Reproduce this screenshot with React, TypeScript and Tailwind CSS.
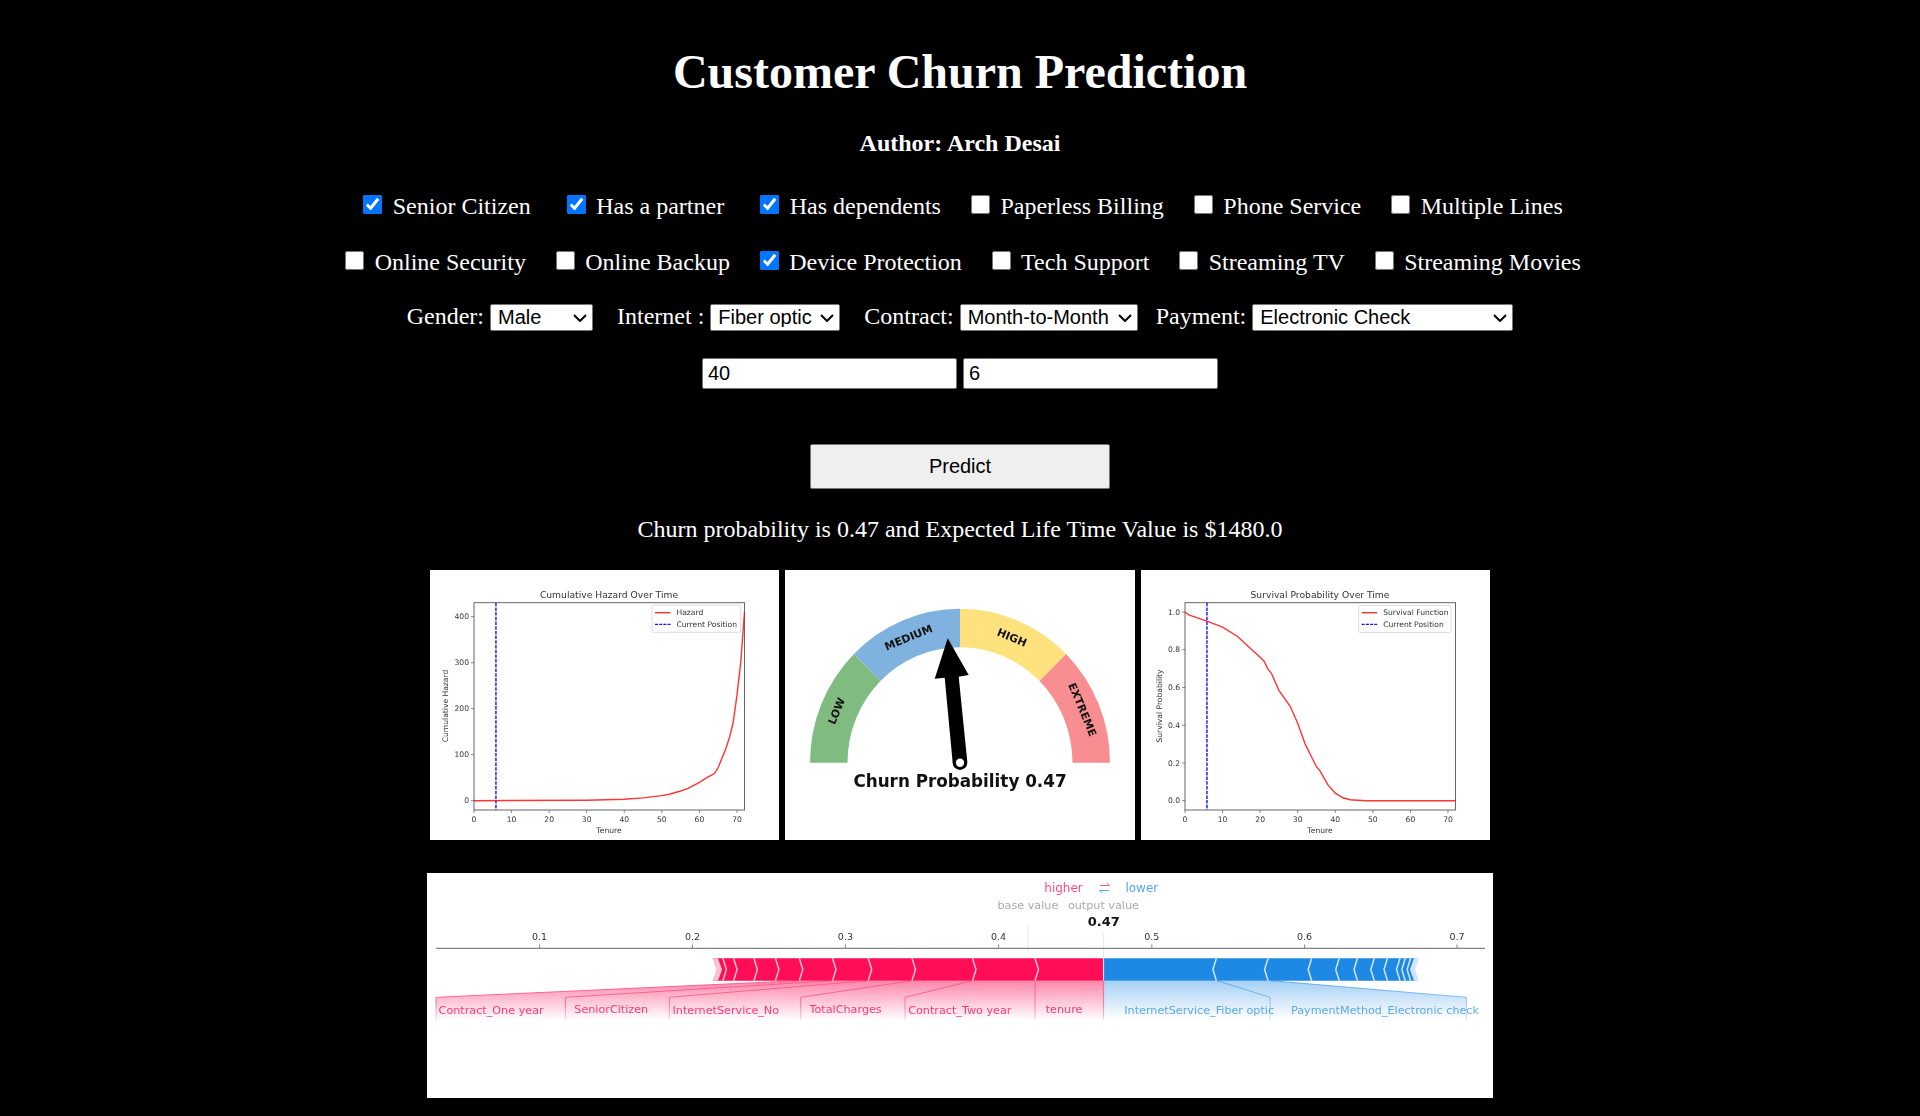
import React from "react";

const serif = { fontFamily: '"Liberation Serif", serif' };

function Check({ label, checked, cls = "" }: { label: string; checked?: boolean; cls?: string }) {
  return (
    <label className={"flex items-center gap-[10.5px] " + cls}>
      <input type="checkbox" defaultChecked={checked} className="w-[19px] h-[19px] m-0 -mt-[3px]" />
      <span>{label}</span>
    </label>
  );
}

function Sel({ value, cls }: { value: string; cls: string }) {
  return (
    <div className={"relative h-[27px] ml-[6px] " + cls}>
      <select
        defaultValue={value}
        className="block w-full h-full appearance-none bg-white text-black border border-[#767676] rounded-[2px] pl-[7px] pb-[2px] text-[20px] leading-none font-['Liberation_Sans',sans-serif]"
      >
        <option>{value}</option>
      </select>
      <svg viewBox="0 0 14 8" width="14" height="8" className="absolute right-[6px] top-[10px] pointer-events-none">
        <polyline points="1,1 7,7 13,1" fill="none" stroke="#000" strokeWidth="2" />
      </svg>
    </div>
  );
}

const dv = "DejaVu Sans, sans-serif";

function LineChart({
  title, ylabel, ticks, pts, y0, k, legend, lx, lw, ly, lh, ylx,
}: {
  title: string; ylabel: string; ticks: [number, string][]; pts: [number, number][];
  y0: number; k: number; legend: string; lx: number; lw: number; ly: number; lh: number; ylx: number;
}) {
  const X = (t: number) => 44 + 3.757 * t;
  const Y = (v: number) => y0 - k * v;
  const d = pts.map((p) => `${X(p[0]).toFixed(1)},${Y(p[1]).toFixed(1)}`).join(" ");
  return (
    <svg viewBox="0 0 349 270" width="349" height="270" className="block blur-[0.5px]" fontFamily={dv}>
      <text x="179" y="27.5" fontSize="9.2" fill="#333" textAnchor="middle">{title}</text>
      <rect x="44" y="32.7" width="270.5" height="207.3" fill="none" stroke="#555" strokeWidth="0.9" />
      {[0, 10, 20, 30, 40, 50, 60, 70].map((t) => (
        <g key={t}>
          <line x1={X(t)} x2={X(t)} y1="240" y2="243" stroke="#555" strokeWidth="0.7" />
          <text x={X(t)} y="252" fontSize="7.6" fill="#333" textAnchor="middle">{t}</text>
        </g>
      ))}
      {ticks.map(([v, s]) => (
        <g key={s}>
          <line x1="41" x2="44" y1={Y(v)} y2={Y(v)} stroke="#555" strokeWidth="0.7" />
          <text x="39" y={Y(v) + 2.7} fontSize="7.6" fill="#333" textAnchor="end">{s}</text>
        </g>
      ))}
      <text x="179" y="263" fontSize="7.6" fill="#333" textAnchor="middle">Tenure</text>
      <text transform={`translate(${ylx} 136) rotate(-90)`} fontSize="7.6" fill="#333" textAnchor="middle">{ylabel}</text>
      <line x1={X(6) - 0.6} x2={X(6) - 0.6} y1="32.7" y2="240" stroke="#1010ff" strokeWidth="1.4" strokeDasharray="3.5 1.2" />
      <polyline points={d} fill="none" stroke="#ff1010" strokeOpacity="0.85" strokeWidth="1.4" />
      <rect x={lx} y={ly} width={lw} height={lh} rx="1.5" fill="#fff" stroke="#cfcfcf" strokeWidth="0.7" />
      <line x1={lx + 3} x2={lx + 18.5} y1="42.7" y2="42.7" stroke="#ff2020" strokeWidth="1.3" />
      <line x1={lx + 3} x2={lx + 18.5} y1="54.3" y2="54.3" stroke="#1010ff" strokeWidth="1.2" strokeDasharray="3 1.2" />
      <text x={lx + 24.5} y="45.4" fontSize="7.6" fill="#333">{legend}</text>
      <text x={lx + 24.5} y="57" fontSize="7.6" fill="#333">Current Position</text>
    </svg>
  );
}

function wedge(a0: number, a1: number, ro: number, ri: number, cx: number, cy: number) {
  const sy = 1.026;
  const p = (r: number, a: number) => {
    const t = (a * Math.PI) / 180;
    return `${(cx + r * Math.cos(t)).toFixed(2)} ${(cy - r * sy * Math.sin(t)).toFixed(2)}`;
  };
  return `M${p(ro, a0)} A${ro} ${ro * sy} 0 0 1 ${p(ro, a1)} L${p(ri, a1)} A${ri} ${ri * sy} 0 0 0 ${p(ri, a0)} Z`;
}

function Gauge() {
  const cx = 175, cy = 192.7;
  return (
    <svg viewBox="0 0 350 270" width="350" height="270" className="block blur-[0.35px]" fontFamily={dv}>
      <path d={wedge(180, 135, 150, 112.5, cx, cy)} fill="#80bc80" />
      <path d={wedge(135, 90, 150, 112.5, cx, cy)} fill="#7fb2de" />
      <path d={wedge(90, 45, 150, 112.5, cx, cy)} fill="#ffe17d" />
      <path d={wedge(45, 0, 150, 112.5, cx, cy)} fill="#f88e92" />
      {[["LOW", 55, 142.5, -67.5], ["MEDIUM", 125, 71, -22.5], ["HIGH", 225.5, 71, 22.5], ["EXTREME", 294, 141, 67.5]].map(
        ([s, x, y, r]) => (
          <text key={s as string} transform={`translate(${x} ${y}) rotate(${r})`} fontSize="10.8" fontWeight="bold" textAnchor="middle" fill="#111">
            {s}
          </text>
        )
      )}
      <polygon points="162.7,68.3 149.7,108.7 159.7,107.7 167.7,193 182.3,191.7 173.7,106.7 183.7,105" fill="#000" />
      <circle cx={cx} cy={cy} r="7.3" fill="#000" />
      <circle cx={cx} cy={cy} r="4.2" fill="#fff" />
      <text x={cx} y="216.8" fontSize="16.8" fontWeight="bold" textAnchor="middle" fill="#111">Churn Probability 0.47</text>
    </svg>
  );
}

function Force() {
  const T = 85.3, B = 107.7, M = 96.5;
  const reds = [295.9, 306.6, 326.9, 348.4, 372.3, 405.5, 441.2, 485, 545.5, 608];
  const blues = [785.9, 837.6, 881.2, 908.7, 927, 943.8, 957, 969.5, 974.8, 980.1, 985.8];
  const axis: [number, string][] = [[112.6, "0.1"], [265.5, "0.2"], [418.4, "0.3"], [571.6, "0.4"], [724.8, "0.5"], [877.6, "0.6"], [1030, "0.7"]];
  const pinkLines: [number, number][] = [[372.3, 9], [405.5, 138.4], [441.2, 242.3], [485, 373.7], [545.5, 478], [608, 608], [676.6, 676.6]];
  const pinkLabels: [string, number, number][] = [
    ["Contract_One year", 11.6, 141], ["SeniorCitizen", 147.3, 140.3], ["InternetService_No", 245.5, 141],
    ["TotalCharges", 382.6, 140.3], ["Contract_Two year", 481.2, 141], ["tenure", 618.7, 140.3],
  ];
  return (
    <svg viewBox="0 0 1066 225" width="1066" height="225" className="block blur-[0.4px]" fontFamily={dv}>
      <defs>
        <linearGradient id="pg" gradientUnits="userSpaceOnUse" x1="0" y1="107.7" x2="0" y2="147">
          <stop offset="0" stopColor="#ff0d57" stopOpacity="0.5" />
          <stop offset="1" stopColor="#ff0d57" stopOpacity="0" />
        </linearGradient>
        <linearGradient id="pl" gradientUnits="userSpaceOnUse" x1="0" y1="107.7" x2="0" y2="147">
          <stop offset="0" stopColor="#ff5c8d" stopOpacity="1" />
          <stop offset="0.55" stopColor="#ff5c8d" stopOpacity="0.85" />
          <stop offset="1" stopColor="#ff5c8d" stopOpacity="0.25" />
        </linearGradient>
        <linearGradient id="bg" gradientUnits="userSpaceOnUse" x1="0" y1="107.7" x2="0" y2="147">
          <stop offset="0" stopColor="#1e88e5" stopOpacity="0.4" />
          <stop offset="1" stopColor="#1e88e5" stopOpacity="0" />
        </linearGradient>
        <linearGradient id="bl" gradientUnits="userSpaceOnUse" x1="0" y1="107.7" x2="0" y2="147">
          <stop offset="0" stopColor="#5aa9ee" stopOpacity="1" />
          <stop offset="1" stopColor="#5aa9ee" stopOpacity="0.3" />
        </linearGradient>
      </defs>

      <text x="617.3" y="19" fontSize="12" fill="#ff0d57" fillOpacity="0.75">higher</text>
      <text x="698.4" y="19" fontSize="12" fill="#1e88e5" fillOpacity="0.75">lower</text>
      <path d="M673 12.5h9.5l-2.5-2.2" fill="none" stroke="#ff5c8d" strokeWidth="1" />
      <path d="M682 17.5h-9.5l2.5 2.2" fill="none" stroke="#5aa9ee" strokeWidth="1" />
      <text x="570.5" y="36" fontSize="11.2" fill="#aaa">base value</text>
      <text x="640.9" y="36" fontSize="11.2" fill="#aaa">output value</text>
      <text x="676.8" y="52.8" fontSize="13" fontWeight="bold" fill="#111" textAnchor="middle">0.47</text>
      <line x1="601" x2="601" y1="52" y2="80" stroke="#e4e4e4" strokeWidth="0.9" />
      <line x1="676.6" x2="676.6" y1="60" y2="85" stroke="#e4e4e4" strokeWidth="0.9" />

      <line x1="9" x2="1058" y1="75.3" y2="75.3" stroke="#555" strokeWidth="0.9" />
      {axis.map(([x, s]) => (
        <g key={s}>
          <line x1={x} x2={x} y1="71.5" y2="75" stroke="#555" strokeWidth="0.7" />
          <text x={x} y="67.3" fontSize="9.5" fill="#333" textAnchor="middle">{s}</text>
        </g>
      ))}

      <polygon points={`372.3,${B} 676.6,${B} 676.6,147 9,147 9,124.3`} fill="url(#pg)" />
      <polygon points={`676.6,${B} 843.7,${B} 1039.4,124.3 1039.4,147 676.6,147`} fill="url(#bg)" />
      {pinkLines.map(([a, b]) => (
        <polyline key={b} points={`${a},${B} ${b},124.3 ${b},147`} fill="none" stroke="url(#pl)" strokeWidth="1" />
      ))}
      <polyline points={`790,${B} 843,124.3 843,147`} fill="none" stroke="url(#bl)" strokeWidth="1" />
      <polyline points={`843.7,${B} 1039.4,124.3 1039.4,147`} fill="none" stroke="url(#bl)" strokeWidth="1" />

      <polygon points={`286,${T} 676.6,${T} 676.6,${B} 286,${B} 290,${M}`} fill="#ff0d57" />
      <polygon points={`286,${T} 291,${T} 295,${M} 291,${B} 286,${B} 290,${M}`} fill="#ffc3d5" />
      <polygon points={`676.6,${T} 989,${T} 985,${M} 989,${B} 676.6,${B}`} fill="#1e88e5" />
      <polygon points={`987,${T} 992,${T} 988,${M} 992,${B} 987,${B} 983,${M}`} fill="#d1e6fa" />
      {reds.map((x) => (
        <polyline key={x} points={`${x},${T} ${x + 3.5},${M} ${x},${B}`} fill="none" stroke="#ffc3d5" strokeWidth="1.5" />
      ))}
      {blues.map((x) => (
        <polyline key={x} points={`${x + 3.5},${T} ${x},${M} ${x + 3.5},${B}`} fill="none" stroke="#d1e6fa" strokeWidth="1.5" />
      ))}
      <line x1="676.6" x2="676.6" y1={T} y2={B} stroke="#fff" strokeWidth="0.8" />

      {pinkLabels.map(([s, x, y]) => (
        <text key={s} x={x} y={y} fontSize="11.2" fill="#ff0d57" fillOpacity="0.8">{s}</text>
      ))}
      <text x="697.3" y="141" fontSize="11.2" fill="#1e88e5" fillOpacity="0.7">InternetService_Fiber optic</text>
      <text x="864" y="141" fontSize="11.2" fill="#1e88e5" fillOpacity="0.7">PaymentMethod_Electronic check</text>
    </svg>
  );
}

export default function App() {
  const inputCls = "w-[255px] h-[31px] bg-white text-black border border-[#767676] rounded-[2px] px-[5px] text-[20px] font-['Liberation_Sans',sans-serif]";
  return (
    <div className="min-h-screen bg-black text-white text-center text-[24px] pt-[40px] pb-[18px]" style={serif}>
      <h1 className="text-[48px] font-bold leading-[64px]">Customer Churn Prediction</h1>
      <h3 className="mt-[24px] text-[24px] font-bold leading-[30px]">Author: Arch Desai</h3>

      <div className="mt-[34px] pl-[6px] flex justify-center gap-x-[30px] h-[28px] leading-[28px]">
        <Check label="Senior Citizen" checked />
        <Check label="Has a partner" checked cls="ml-[6px]" />
        <Check label="Has dependents" checked cls="ml-[6px]" />
        <Check label="Paperless Billing" />
        <Check label="Phone Service" />
        <Check label="Multiple Lines" />
      </div>
      <div className="mt-[28px] pl-[6px] flex justify-center gap-x-[29.8px] h-[28px] leading-[28px]">
        <Check label="Online Security" />
        <Check label="Online Backup" />
        <Check label="Device Protection" checked />
        <Check label="Tech Support" />
        <Check label="Streaming TV" />
        <Check label="Streaming Movies" />
      </div>

      <div className="mt-[28px] flex justify-center items-center h-[27px] leading-[27px]">
        <span className="pb-[2px]">Gender:</span>
        <Sel value="Male" cls="w-[103px]" />
        <span className="ml-[24px] pb-[2px]">Internet :</span>
        <Sel value="Fiber optic" cls="w-[130px]" />
        <span className="ml-[24px] pb-[2px]">Contract:</span>
        <Sel value="Month-to-Month" cls="w-[178px]" />
        <span className="ml-[18px] pb-[2px]">Payment:</span>
        <Sel value="Electronic Check" cls="w-[261px]" />
      </div>

      <div className="mt-[27px] flex justify-center gap-x-[6px]">
        <input defaultValue="40" className={inputCls} />
        <input defaultValue="6" className={inputCls} />
      </div>

      <button className="mt-[55px] block mx-auto w-[300px] h-[45px] pb-[2px] bg-[#efefef] text-black border border-[#767676] rounded-[2px] text-[20px] font-['Liberation_Sans',sans-serif]">
        Predict
      </button>

      <p className="mt-[25px] leading-[30px]">Churn probability is 0.47 and Expected Life Time Value is $1480.0</p>

      <div className="mt-[26px] flex justify-center gap-x-[6px]">
        <div className="bg-white w-[349px] h-[270px]">
          <LineChart
            title="Cumulative Hazard Over Time" ylabel="Cumulative Hazard" y0={230.67} k={0.46} legend="Hazard"
            lx={222} lw={88.7} ly={35} lh={27.3} ylx={18}
            ticks={[[0, "0"], [100, "100"], [200, "200"], [300, "300"], [400, "400"]]}
            pts={[[0, 0], [30, 1], [40, 3], [45, 6], [50, 11], [52, 14], [55, 21], [57, 27], [60, 40], [62, 50], [64, 59], [65, 72], [67, 112], [68, 138], [69, 170], [70, 230], [71, 300], [72, 410]]}
          />
        </div>
        <div className="bg-white w-[350px] h-[270px]"><Gauge /></div>
        <div className="bg-white w-[349px] h-[270px]">
          <LineChart
            title="Survival Probability Over Time" ylabel="Survival Probability" y0={230.67} k={188.7} legend="Survival Function"
            lx={217.7} lw={92.3} ly={35.5} lh={27} ylx={21}
            ticks={[[0, "0.0"], [0.2, "0.2"], [0.4, "0.4"], [0.6, "0.6"], [0.8, "0.8"], [1, "1.0"]]}
            pts={[[0, 1], [1, 0.985], [6, 0.95], [10, 0.92], [14, 0.87], [17, 0.815], [20, 0.76], [21, 0.74], [22, 0.7], [23, 0.675], [25, 0.585], [28, 0.5], [30, 0.41], [32, 0.3], [34, 0.22], [35, 0.18], [36, 0.155], [38, 0.085], [40, 0.04], [42, 0.015], [44, 0.005], [48, 0], [72, 0]]}
          />
        </div>
      </div>

      <div className="mt-[33px] mx-auto bg-white w-[1066px] h-[225px]"><Force /></div>
    </div>
  );
}
